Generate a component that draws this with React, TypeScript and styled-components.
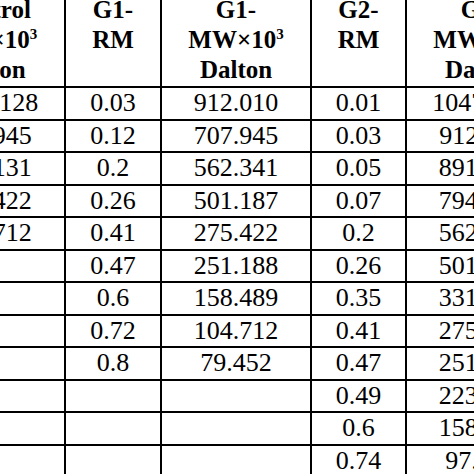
import React from 'react';
import styled, { createGlobalStyle } from 'styled-components';

const GlobalStyle = createGlobalStyle`
  html, body {
    margin: 0;
    padding: 0;
    background: #ffffff;
    overflow: hidden;
  }
`;

const serif = `'Liberation Serif', 'Times New Roman', serif`;

const Page = styled.div`
  width: 474px;
  height: 474px;
  overflow: hidden;
`;

// grid with black background: the 2px gaps draw the rules
const Table = styled.div`
  display: grid;
  grid-template-columns: 149px 94px 148px 93px 148px;
  grid-template-rows: 92px;
  grid-auto-rows: 30.5px;
  gap: 2px;
  padding: 2px;
  background: #000;
  width: max-content;
  margin: -8px 0 0 -87px;
  color: #000;
`;

const HeadCell = styled.div`
  background: #fff;
  padding-top: 1px;
  font-family: ${serif};
  font-size: 25px;
  font-weight: 700;
  line-height: 30px;
  text-align: center;
  white-space: nowrap;

  sup {
    font-size: 15px;
    line-height: 0;
    vertical-align: 9px;
  }
`;

const Cell = styled.div`
  background: #fff;
  display: flex;
  align-items: center;
  justify-content: center;
  font-family: ${serif};
  font-size: 26px;
  white-space: nowrap;
`;

const MW = () => (
  <>
    MW×10<sup>3</sup>
  </>
);

const headers: React.ReactNode[] = [
  <>Control<br /><MW /><br />Dalton</>,
  <>G1-<br />RM</>,
  <>G1-<br /><MW /><br />Dalton</>,
  <>G2-<br />RM</>,
  <>G2-<br /><MW /><br />Dalton</>,
];

const control = ['1071.128', '707.945', '891.131', '275.422', '104.712'];
const g1rm = ['0.03', '0.12', '0.2', '0.26', '0.41', '0.47', '0.6', '0.72', '0.8'];
const g1mw = ['912.010', '707.945', '562.341', '501.187', '275.422', '251.188', '158.489', '104.712', '79.452'];
const g2rm = ['0.01', '0.03', '0.05', '0.07', '0.2', '0.26', '0.35', '0.41', '0.47', '0.49', '0.6', '0.74'];
const g2mw = ['1047.129', '912.011', '891.251', '794.328', '562.341', '501.187', '331.131', '275.423', '251.189', '223.872', '158.489', '97.724'];

const ROWS = 13;

const App = () => {
  const rows = Array.from({ length: ROWS }, (_, i) => [
    control[i] ?? '',
    g1rm[i] ?? '',
    g1mw[i] ?? '',
    g2rm[i] ?? '',
    g2mw[i] ?? '',
  ]);

  return (
    <Page>
      <GlobalStyle />
      <Table>
        {headers.map((h, i) => (
          <HeadCell key={`h${i}`}>{h}</HeadCell>
        ))}
        {rows.map((row, r) =>
          row.map((v, c) => <Cell key={`${r}-${c}`}>{v}</Cell>)
        )}
      </Table>
    </Page>
  );
};

export default App;
